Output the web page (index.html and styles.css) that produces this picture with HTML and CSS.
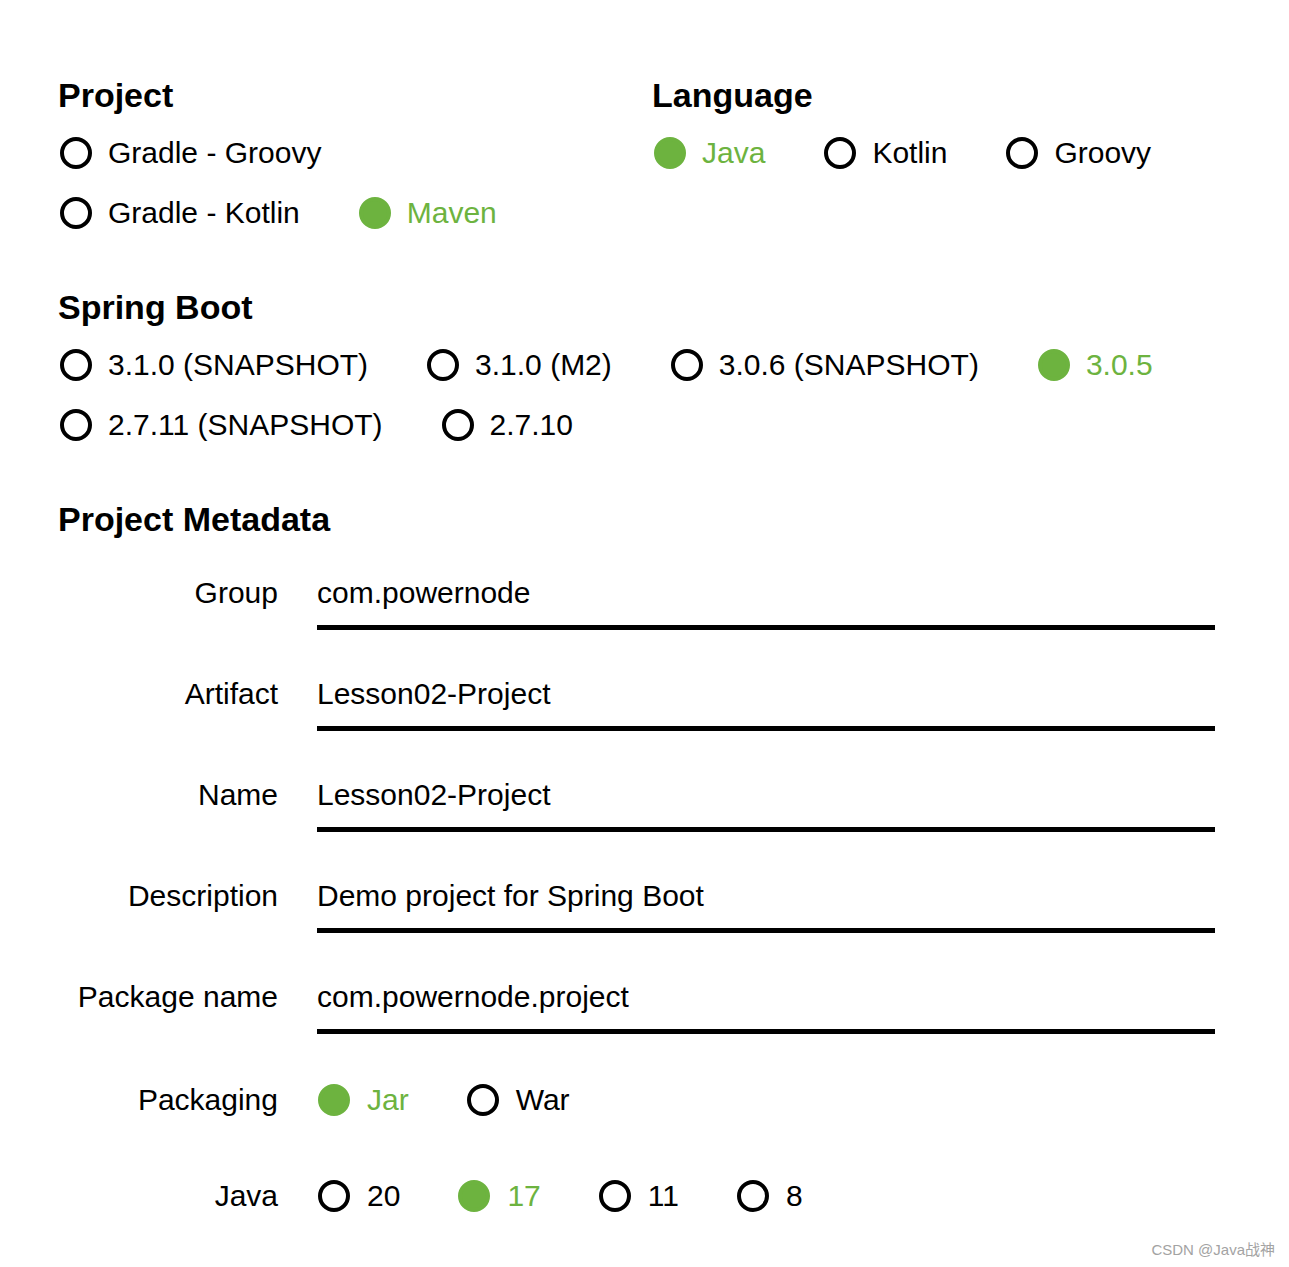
FILE: index.html
```html
<!DOCTYPE html>
<html lang="en">
<head>
<meta charset="utf-8">
<title>Spring Initializr</title>
<link rel="stylesheet" href="styles.css">
</head>
<body>
<div class="page">
  <div class="top-grid">
    <section class="section">
      <h2 class="heading">Project</h2>
      <div class="row">
        <label class="opt"><span class="radio"></span><span class="opt-text">Gradle - Groovy</span></label>
      </div>
      <div class="row">
        <label class="opt"><span class="radio"></span><span class="opt-text">Gradle - Kotlin</span></label>
        <label class="opt is-checked"><span class="radio"></span><span class="opt-text">Maven</span></label>
      </div>
    </section>
    <section class="section">
      <h2 class="heading">Language</h2>
      <div class="row">
        <label class="opt is-checked"><span class="radio"></span><span class="opt-text">Java</span></label>
        <label class="opt"><span class="radio"></span><span class="opt-text">Kotlin</span></label>
        <label class="opt"><span class="radio"></span><span class="opt-text">Groovy</span></label>
      </div>
    </section>
  </div>

  <section class="section">
    <h2 class="heading">Spring Boot</h2>
    <div class="row">
      <label class="opt"><span class="radio"></span><span class="opt-text">3.1.0 (SNAPSHOT)</span></label>
      <label class="opt"><span class="radio"></span><span class="opt-text">3.1.0 (M2)</span></label>
      <label class="opt"><span class="radio"></span><span class="opt-text">3.0.6 (SNAPSHOT)</span></label>
      <label class="opt is-checked"><span class="radio"></span><span class="opt-text">3.0.5</span></label>
    </div>
    <div class="row">
      <label class="opt"><span class="radio"></span><span class="opt-text">2.7.11 (SNAPSHOT)</span></label>
      <label class="opt"><span class="radio"></span><span class="opt-text">2.7.10</span></label>
    </div>
  </section>

  <section class="section meta">
    <h2 class="heading">Project Metadata</h2>
    <div class="fields">
      <div class="field-row">
        <div class="field-label">Group</div>
        <div class="field-input">com.powernode</div>
      </div>
      <div class="field-row">
        <div class="field-label">Artifact</div>
        <div class="field-input">Lesson02-Project</div>
      </div>
      <div class="field-row">
        <div class="field-label">Name</div>
        <div class="field-input">Lesson02-Project</div>
      </div>
      <div class="field-row">
        <div class="field-label">Description</div>
        <div class="field-input">Demo project for Spring Boot</div>
      </div>
      <div class="field-row">
        <div class="field-label">Package name</div>
        <div class="field-input">com.powernode.project</div>
      </div>
    </div>
    <div class="choices">
      <div class="choice-row">
        <div class="field-label">Packaging</div>
        <div class="row meta-radios">
          <label class="opt is-checked"><span class="radio"></span><span class="opt-text">Jar</span></label>
          <label class="opt"><span class="radio"></span><span class="opt-text">War</span></label>
        </div>
      </div>
      <div class="choice-row">
        <div class="field-label">Java</div>
        <div class="row meta-radios">
          <label class="opt"><span class="radio"></span><span class="opt-text">20</span></label>
          <label class="opt is-checked"><span class="radio"></span><span class="opt-text">17</span></label>
          <label class="opt"><span class="radio"></span><span class="opt-text">11</span></label>
          <label class="opt"><span class="radio"></span><span class="opt-text">8</span></label>
        </div>
      </div>
    </div>
  </section>
</div>
<div class="watermark">CSDN @Java战神</div>
</body>
</html>
```

FILE: styles.css
```css
html, body {
  margin: 0;
  padding: 0;
  background: #ffffff;
}

body {
  font-family: "Liberation Sans", Arial, "Noto Sans CJK SC", sans-serif;
  color: #000000;
  width: 1289px;
  height: 1267px;
  position: relative;
  overflow: hidden;
}

.page {
  padding: 75px 0 0 60px;
}

.top-grid {
  display: grid;
  grid-template-columns: 594px auto;
}

.section {
  margin-bottom: 44px;
}

.heading {
  margin: 0 0 8px -2px;
  font-size: 34px;
  line-height: 40px;
  font-weight: 700;
}

.row {
  display: flex;
  align-items: center;
  height: 60px;
}

.opt {
  display: flex;
  align-items: center;
  margin-right: 59px;
  font-size: 30px;
  white-space: nowrap;
}

.radio {
  box-sizing: border-box;
  width: 32px;
  height: 32px;
  border: 4px solid #000000;
  border-radius: 50%;
  margin-right: 16px;
  flex: none;
}

.is-checked .radio {
  background: #6db33f;
  border-color: #6db33f;
}

.is-checked .opt-text {
  color: #6db33f;
}

.meta .heading {
  margin-bottom: 37px;
}

.fields {
  display: flex;
  flex-direction: column;
  gap: 47px;
}

.field-row {
  display: flex;
  align-items: flex-start;
}

.field-label {
  box-sizing: border-box;
  width: 218px;
  margin-right: 39px;
  text-align: right;
  font-size: 30px;
  line-height: 34px;
  flex: none;
}

.field-input {
  width: 898px;
  font-size: 30px;
  line-height: 34px;
  padding-bottom: 15px;
  border-bottom: 5px solid #000000;
}

.choices {
  margin-top: 36px;
  display: flex;
  flex-direction: column;
  gap: 36px;
}

.choice-row {
  display: flex;
  align-items: center;
  height: 60px;
}

.meta-radios {
  padding-left: 1px;
}

.meta-radios .radio {
  margin-right: 17px;
}

.meta-radios .opt {
  margin-right: 58px;
}

.watermark {
  position: absolute;
  right: 14px;
  bottom: 8px;
  font-size: 15px;
  color: #a3a3a3;
}
```
